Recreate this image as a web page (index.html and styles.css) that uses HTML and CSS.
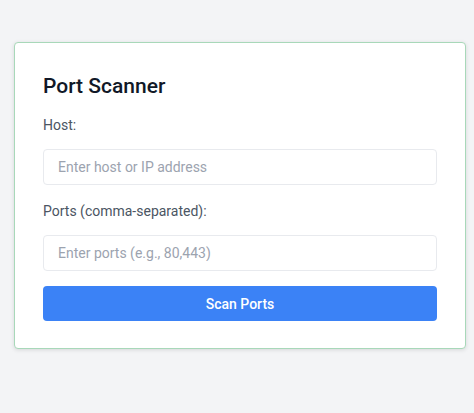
FILE: index.html
```html
<!DOCTYPE html>
<html lang="en">
<head>
<meta charset="utf-8">
<title>Port Scanner</title>
<link rel="stylesheet" href="styles.css">
</head>
<body>
<main class="page">
  <form class="card">
    <h1 class="title">Port Scanner</h1>
    <label class="label" for="host">Host:</label>
    <input class="field" id="host" type="text" placeholder="Enter host or IP address">
    <label class="label label-gap" for="ports">Ports (comma-separated):</label>
    <input class="field" id="ports" type="text" placeholder="Enter ports (e.g., 80,443)">
    <button class="btn" type="button">Scan Ports</button>
  </form>
</main>
</body>
</html>
```
FILE: styles.css
```css
* { box-sizing: border-box; }
html, body { margin: 0; padding: 0; }
body {
  background: #f3f4f6;
  font-family: Roboto, "Open Sans", sans-serif;
  width: 474px;
  height: 413px;
  overflow: hidden;
}
.page {
  padding: 42px 8px 0 14px;
}
.card {
  width: 452px;
  background: #fff;
  border: 1px solid #a8d8b9;
  border-radius: 4px;
  box-shadow: 0 1px 4px rgba(0,0,0,0.12);
  padding: 27px 28px 27px;
  display: flex;
  flex-direction: column;
}
.title {
  margin: 0 0 12px;
  font-size: 21px;
  line-height: 32px;
  font-weight: 500;
  color: #111827;
}
.label {
  font-size: 14px;
  line-height: 22px;
  color: #4b5563;
  margin-bottom: 13px;
}
.label-gap { margin-top: 15px; }
.field {
  height: 36px;
  border: 1px solid #e8eaee;
  border-radius: 4px;
  padding: 0 14px;
  font-family: inherit;
  font-size: 14px;
  color: #111827;
  background: #fff;
  outline: none;
}
.field::placeholder { color: #9ca3af; }
.btn {
  margin-top: 15px;
  height: 35px;
  border: none;
  border-radius: 4px;
  background: #3b82f6;
  color: #fff;
  font-family: inherit;
  font-size: 14px;
  font-weight: 500;
}
```
